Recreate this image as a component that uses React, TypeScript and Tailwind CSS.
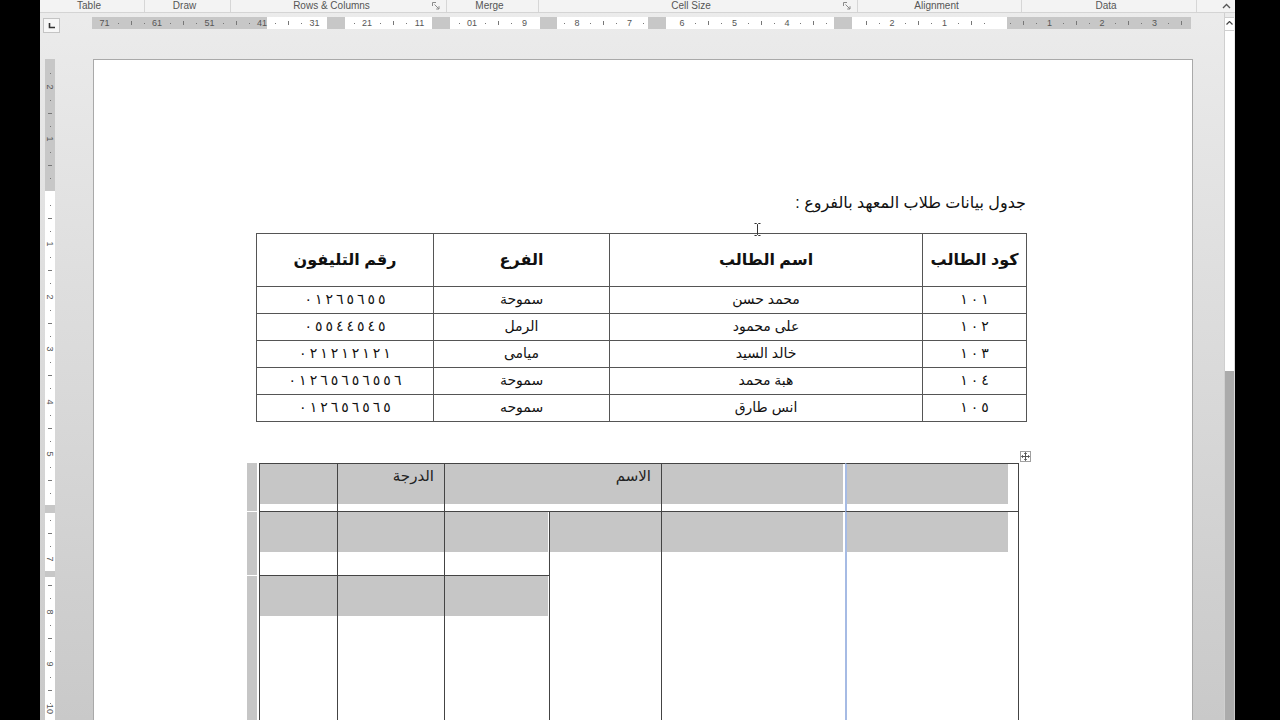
import React from "react";

const groups = [
  { label: "Table", width: "w-[105px]", launcher: false },
  { label: "Draw", width: "w-[86px]", launcher: false },
  { label: "Rows & Columns", width: "w-[216px]", launcher: true },
  { label: "Merge", width: "w-[92px]", launcher: false },
  { label: "Cell Size", width: "w-[319px]", launcher: true },
  { label: "Alignment", width: "w-[164px]", launcher: false },
  { label: "Data", width: "w-[175px]", launcher: false },
];

const students = [
  { code: "١٠١", name: "محمد حسن", branch: "سموحة", phone: "٠١٢٦٥٦٥٥" },
  { code: "١٠٢", name: "على محمود", branch: "الرمل", phone: "٠٥٥٤٤٥٤٥" },
  { code: "١٠٣", name: "خالد السيد", branch: "ميامى", phone: "٠٢١٢١٢١٢١" },
  { code: "١٠٤", name: "هبة محمد", branch: "سموحة", phone: "٠١٢٦٥٦٥٦٥٥٦" },
  { code: "١٠٥", name: "انس طارق", branch: "سموحه", phone: "٠١٢٦٥٦٥٦٥" },
];

const STEP = 52.5;

// column markers on the top ruler (relative to ruler start)
const hBlocks: [number, number][] = [
  [235, 253],
  [340, 358],
  [448, 465],
  [556, 574],
  [742, 760],
];
const vBlocks: [number, number][] = [
  [445, 457],
  [511, 521],
];

const inBlock = (p: number, blocks: [number, number][]) =>
  blocks.some(([a, b]) => p > a - 3 && p < b + 3);

// arabic digits are drawn wider in the original, space them out
function Digits({ value }: { value: string }) {
  return (
    <>
      {value.split("").map((d, i) => (
        <span key={i} className="mx-[1.5px]">
          {d}
        </span>
      ))}
    </>
  );
}

function Launcher() {
  return (
    <svg width="8" height="8" viewBox="0 0 8 8" className="shrink-0">
      <path d="M0.5 4V0.5H4" fill="none" stroke="#8a8a8a" strokeWidth="1" />
      <path d="M2.5 2.5L7 7M7 4.2V7H4.2" fill="none" stroke="#8a8a8a" strokeWidth="1" />
    </svg>
  );
}

function RibbonLabels() {
  return (
    <div className="flex h-[13px] shrink-0 border-b border-[#d4d4d4] bg-[#f3f3f3] text-[10px] leading-[12px] text-[#555]">
      {groups.map((g) => (
        <div key={g.label} className={`${g.width} flex items-center border-r border-[#d6d6d6] pr-[6px]`}>
          <span className="flex-1 text-center">{g.label}</span>
          {g.launcher && <Launcher />}
        </div>
      ))}
      <div className="flex flex-1 items-center justify-end pr-[4px]">
        <svg width="9" height="6" viewBox="0 0 9 6">
          <path d="M1 5L4.5 1.5L8 5" fill="none" stroke="#555" strokeWidth="1.3" />
        </svg>
      </div>
    </div>
  );
}

function HRuler() {
  const marks: React.ReactNode[] = [];
  const origin = 905;
  for (let q = -72; q <= 16; q++) {
    const x = origin + (q * STEP) / 4;
    if (x < 2 || x > 1096 || q === 0) continue;
    if (inBlock(x, hBlocks)) continue;
    if (q % 4 === 0) {
      const k = Math.abs(q / 4);
      const text = q < 0 && k >= 10 ? String(k).split("").reverse().join("") : String(k);
      marks.push(
        <span
          key={q}
          className="absolute top-0 -translate-x-1/2 text-[9px] leading-[12px] text-[#555]"
          style={{ left: x }}
        >
          {text}
        </span>
      );
    } else if (Math.abs(q) % 4 === 2) {
      marks.push(
        <span key={q} className="absolute top-[4px] h-[4px] w-px bg-[#777]" style={{ left: x }} />
      );
    } else {
      marks.push(
        <span key={q} className="absolute top-[6px] h-px w-px bg-[#777]" style={{ left: x }} />
      );
    }
  }
  return (
    <div className="relative ml-[32px] mt-[4px] flex h-[12px] w-[1099px]">
      <div className="w-[175px] bg-[#c7c7c7]" />
      <div className="w-[60px] bg-white" />
      <div className="w-[18px] bg-[#c7c7c7]" />
      <div className="w-[87px] bg-white" />
      <div className="w-[18px] bg-[#c7c7c7]" />
      <div className="w-[90px] bg-white" />
      <div className="w-[17px] bg-[#c7c7c7]" />
      <div className="w-[91px] bg-white" />
      <div className="w-[18px] bg-[#c7c7c7]" />
      <div className="w-[168px] bg-white" />
      <div className="w-[18px] bg-[#c7c7c7]" />
      <div className="w-[155px] bg-white" />
      <div className="w-[184px] bg-[#c7c7c7]" />
      {marks}
    </div>
  );
}

function VRuler() {
  const marks: React.ReactNode[] = [];
  const origin = 133.5;
  for (let q = -10; q <= 44; q++) {
    const y = origin + (q * STEP) / 4;
    if (y < 3 || y > 660 || q === 0) continue;
    if (inBlock(y, vBlocks)) continue;
    if (q % 4 === 0) {
      marks.push(
        <span
          key={q}
          className="absolute left-0 w-[10px] -translate-y-1/2 rotate-90 text-center text-[9px] leading-[10px] text-[#555]"
          style={{ top: Math.min(y, 651) }}
        >
          {Math.abs(q / 4)}
        </span>
      );
    } else if (Math.abs(q) % 4 === 2) {
      marks.push(
        <span key={q} className="absolute left-[3px] h-px w-[4px] bg-[#777]" style={{ top: y }} />
      );
    } else {
      marks.push(
        <span key={q} className="absolute left-[5px] h-px w-px bg-[#777]" style={{ top: y }} />
      );
    }
  }
  return (
    <div className="relative -mt-px ml-[5px] flex h-[662px] w-[10px] flex-col">
      <div className="h-[133px] bg-[#c7c7c7]" />
      <div className="h-[314px] bg-white" />
      <div className="h-[8px] bg-[#c7c7c7]" />
      <div className="h-[58px] bg-white" />
      <div className="h-[6px] bg-[#c7c7c7]" />
      <div className="flex-1 bg-white" />
      {marks}
    </div>
  );
}

function StudentsTable() {
  const th = "border border-[#555] text-center align-middle text-[16px] font-bold text-[#111]";
  const td = "border border-[#555] text-center align-middle text-[14px] leading-[16px] text-[#111] pb-[2px]";
  return (
    <table dir="rtl" className="w-[770px] table-fixed border-collapse">
      <colgroup>
        <col className="w-[104px]" />
        <col className="w-[313px]" />
        <col className="w-[176px]" />
        <col className="w-[177px]" />
      </colgroup>
      <thead>
        <tr className="h-[53px]">
          <th className={th}>كود الطالب</th>
          <th className={th}>اسم الطالب</th>
          <th className={th}>الفرع</th>
          <th className={th}>رقم التليفون</th>
        </tr>
      </thead>
      <tbody>
        {students.map((s) => (
          <tr key={s.code} className="h-[27px]">
            <td className={td}>
              <Digits value={s.code} />
            </td>
            <td className={td}>{s.name}</td>
            <td className={td}>{s.branch}</td>
            <td className={td}>
              <Digits value={s.phone} />
            </td>
          </tr>
        ))}
      </tbody>
    </table>
  );
}

interface CellProps {
  className: string;
  fill?: string;
  text?: string;
}

function Cell({ className, fill = "", text }: CellProps) {
  return (
    <div className={`border-l border-t border-[#444] ${className}`}>
      <div dir="rtl" className={`h-[40px] bg-[#c6c6c6] pr-[10px] pt-[3px] text-[15px] leading-[18px] text-[#222] ${fill}`}>
        {text}
      </div>
    </div>
  );
}

function GradesTable() {
  return (
    <div className="-ml-[9px] mt-[41px] flex">
      <div className="flex w-[10px] flex-col">
        <div className="h-[48px] bg-[#c6c6c6]" />
        <div className="h-px bg-white" />
        <div className="h-[63px] bg-[#c6c6c6]" />
        <div className="h-px bg-white" />
        <div className="flex-1 bg-[#c6c6c6]" />
      </div>
      <div className="relative ml-[2px] grid grid-cols-[78px_107px_105px_112px_184px_173px] grid-rows-[48px_64px_200px] border-r border-[#444]">
        <Cell className="col-start-1 row-start-1" />
        <Cell className="col-start-2 row-start-1" text="الدرجة" />
        <Cell className="col-span-2 col-start-3 row-start-1" text="الاسم" />
        <Cell className="col-start-5 row-start-1" fill="mr-[2px]" />
        <Cell className="col-start-6 row-start-1 border-l-2 border-l-[#a6bbe4]" fill="mr-[10px]" />

        <Cell className="col-start-1 row-start-2" />
        <Cell className="col-start-2 row-start-2" />
        <Cell className="col-start-3 row-start-2" fill="mr-px" />
        <Cell className="col-start-4 row-span-2 row-start-2" />
        <Cell className="col-start-5 row-span-2 row-start-2" fill="mr-[2px]" />
        <Cell className="col-start-6 row-span-2 row-start-2 border-l-2 border-l-[#a6bbe4]" fill="mr-[10px]" />

        <Cell className="col-start-1 row-start-3" />
        <Cell className="col-start-2 row-start-3" />
        <Cell className="col-start-3 row-start-3" fill="mr-px" />

        {/* table move handle */}
        <div className="absolute -right-[13px] -top-[12px] flex h-[11px] w-[11px] items-center justify-center border border-[#a0a0a0] bg-white">
          <svg width="9" height="9" viewBox="0 0 9 9">
            <path d="M4.5 0.5V8.5M0.5 4.5H8.5" stroke="#555" strokeWidth="1" />
            <path d="M3 2L4.5 0.5L6 2M3 7L4.5 8.5L6 7M2 3L0.5 4.5L2 6M7 3L8.5 4.5L7 6" fill="none" stroke="#555" strokeWidth="0.8" />
          </svg>
        </div>
      </div>
    </div>
  );
}

function Page() {
  return (
    <div className="min-h-[700px] w-[1100px] shrink-0 border border-[#a9a9a9] bg-white">
      <div className="relative ml-[162px] w-[770px] pt-[134px]">
        <p dir="rtl" className="h-[18px] text-right text-[16px] leading-[18px] text-[#111]">
          جدول بيانات طلاب المعهد بالفروع :
        </p>
        {/* text cursor */}
        <svg
          width="7"
          height="13"
          viewBox="0 0 7 13"
          className="absolute left-[498px] top-[163px]"
        >
          <path d="M0.5 0.5H2.5L3.5 1.5L4.5 0.5H6.5M3.5 1.5V11.5M0.5 12.5H2.5L3.5 11.5L4.5 12.5H6.5" fill="none" stroke="#333" strokeWidth="1" />
        </svg>
        <div className="mt-[21px]">
          <StudentsTable />
        </div>
        <GradesTable />
      </div>
    </div>
  );
}

function Scrollbar() {
  return (
    <div className="flex w-[10px] shrink-0 flex-col border-l border-[#cfcfcf] pt-[4px]">
      <div className="flex h-[14px] items-start justify-center border-y border-[#cfcfcf] bg-white pt-[3px]">
        <svg width="7" height="4" viewBox="0 0 7 4">
          <path d="M0.5 3.5L3.5 0.5L6.5 3.5" fill="none" stroke="#444" strokeWidth="1.2" />
        </svg>
      </div>
      <div className="h-[340px] bg-white" />
      <div className="flex-1 bg-[#ababab]" />
    </div>
  );
}

export default function App() {
  return (
    <div className="flex h-[720px] w-[1280px] overflow-hidden bg-black font-['Liberation_Sans','DejaVu_Sans',sans-serif]">
      <div className="w-[40px] shrink-0 bg-black" />
      <div className="flex w-[1195px] shrink-0 flex-col overflow-hidden bg-linear-to-b from-[#ececec] to-[#c9c9c9]">
        <RibbonLabels />
        <div className="flex min-h-0 flex-1">
          <div className="flex w-[1184px] shrink-0 flex-col">
            <div className="flex h-[46px] shrink-0 items-start">
              <div className="ml-[3px] mt-[5px] flex h-[15px] w-[17px] items-center justify-center border border-[#c4c4c4] bg-[#f7f7f7]">
                <svg width="7" height="6" viewBox="0 0 7 6">
                  <path d="M1.5 0V4.5H7" fill="none" stroke="#333" strokeWidth="1.6" />
                </svg>
              </div>
              <HRuler />
            </div>
            <div className="flex min-h-0 flex-1 overflow-hidden">
              <div className="w-[53px] shrink-0">
                <VRuler />
              </div>
              <Page />
            </div>
          </div>
          <Scrollbar />
        </div>
      </div>
      <div className="flex-1 bg-black" />
    </div>
  );
}
